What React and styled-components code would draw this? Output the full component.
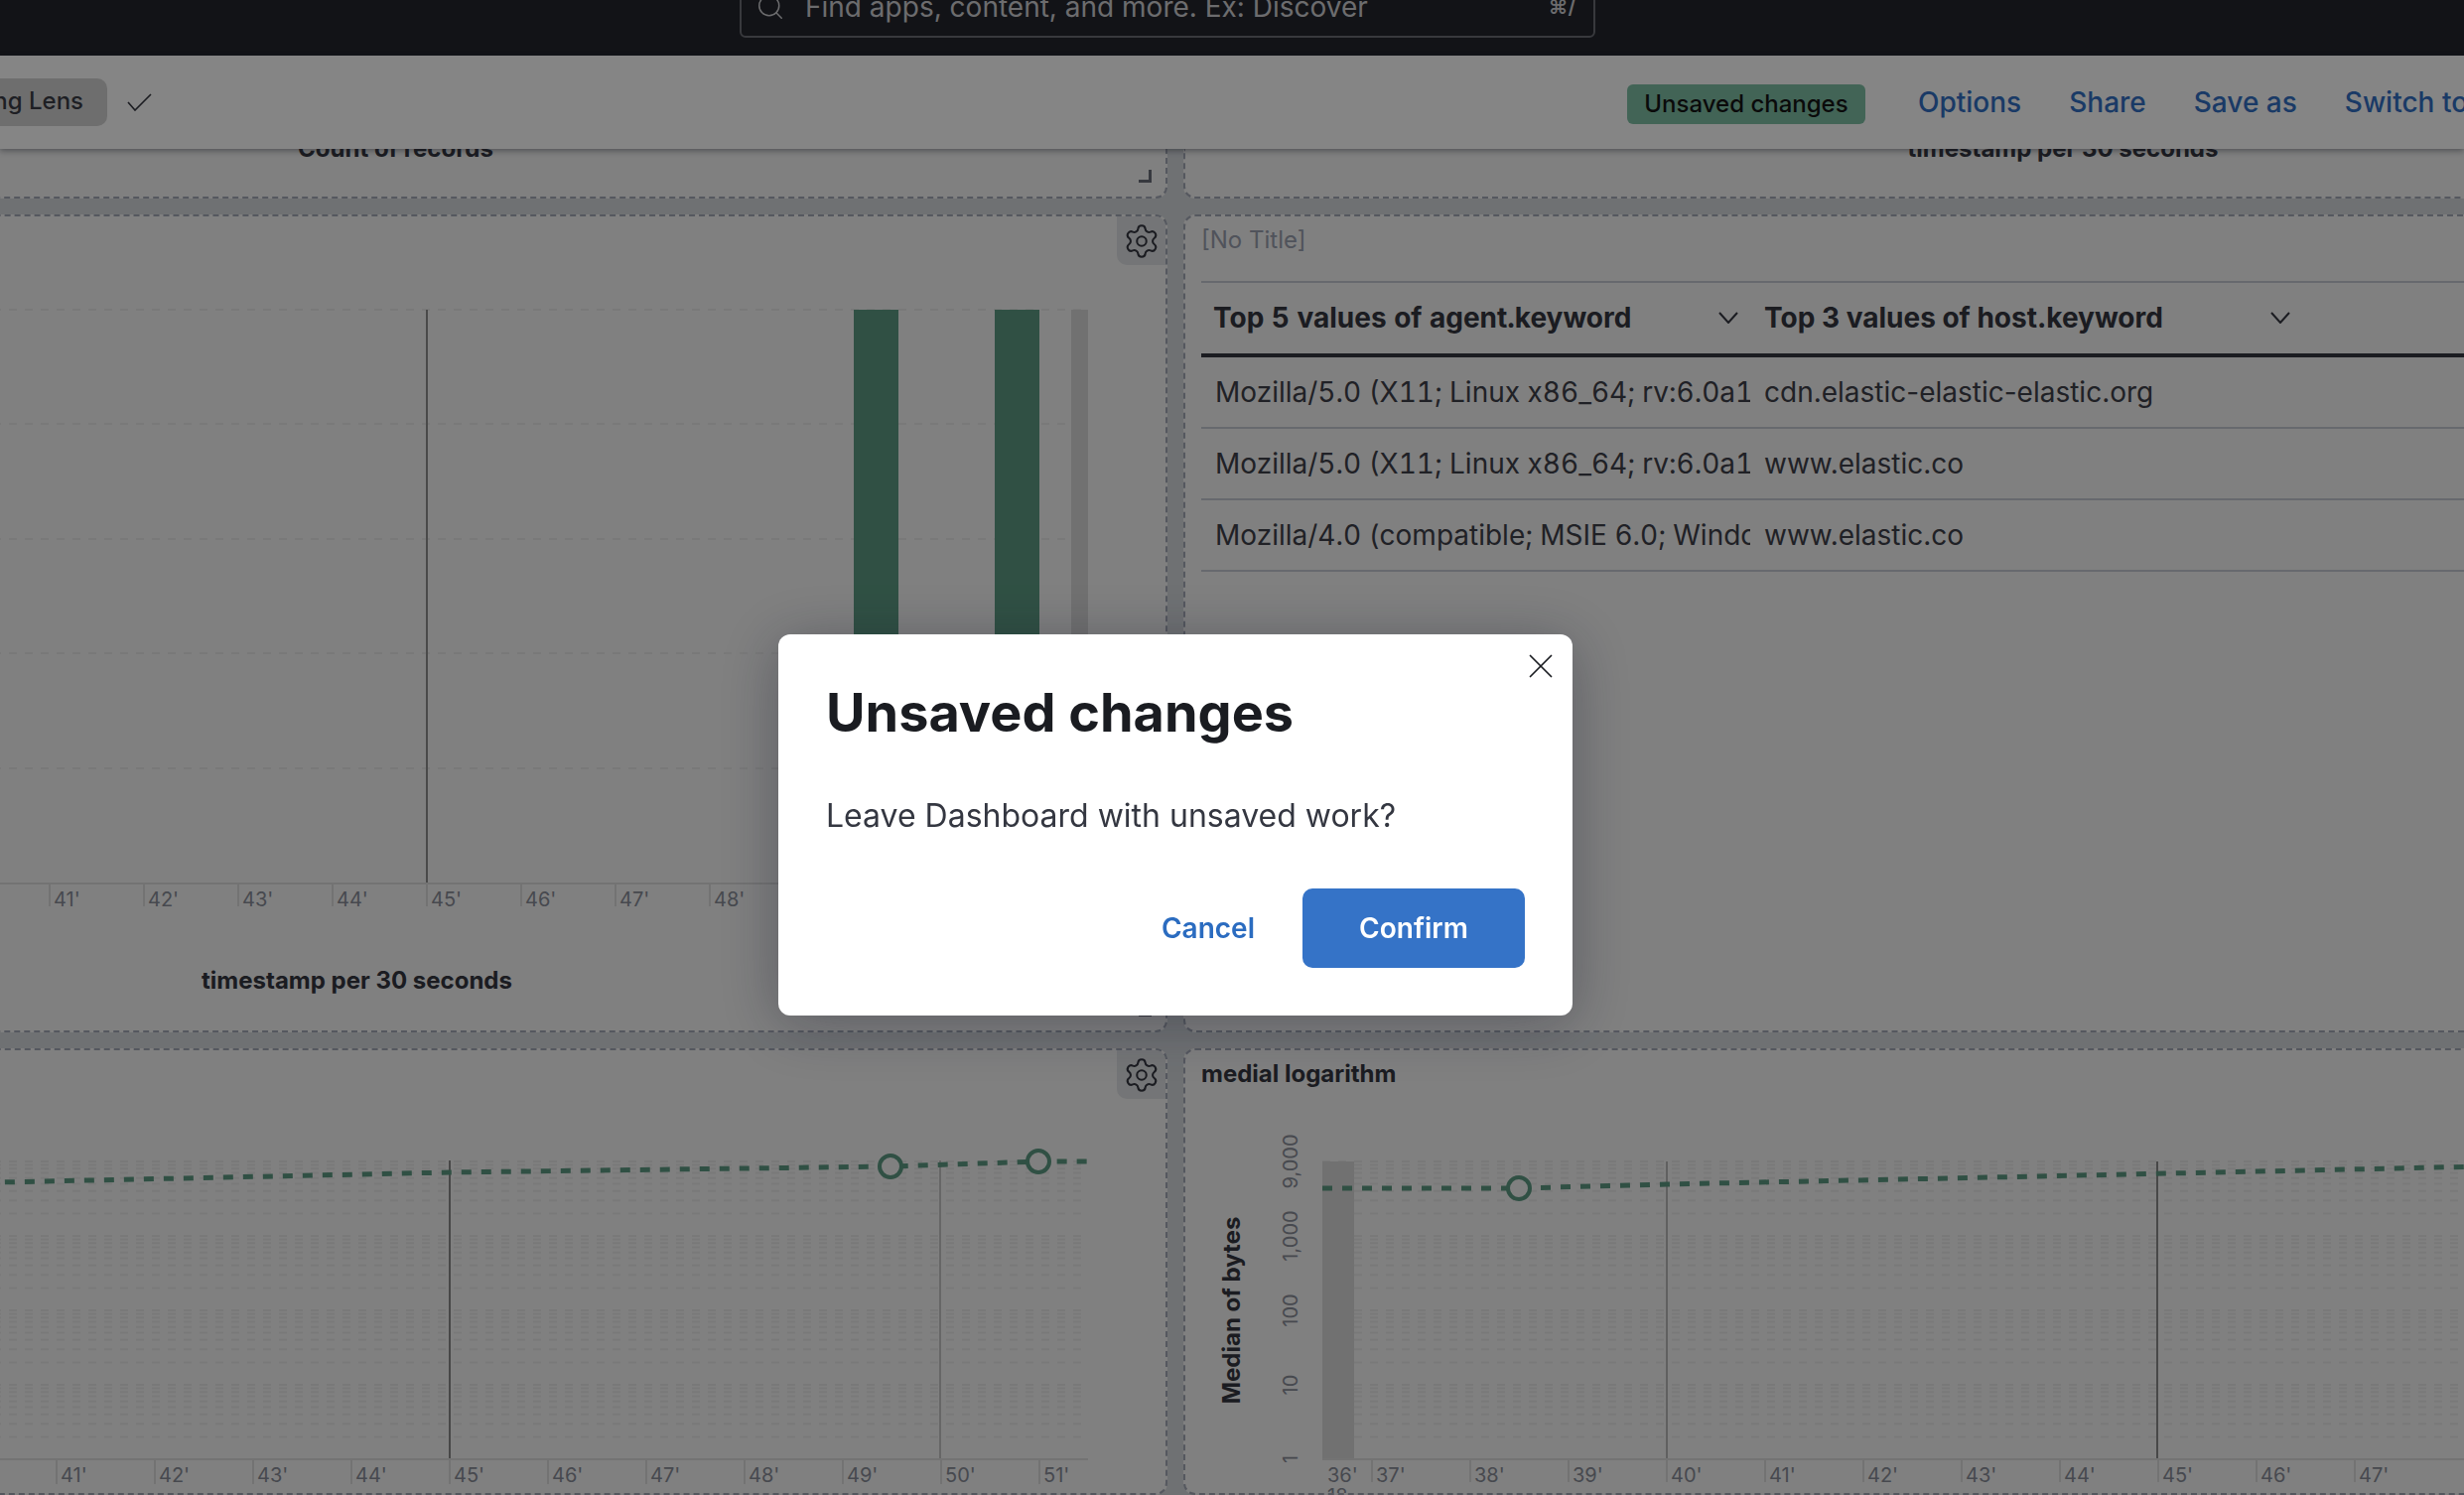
import styled, { createGlobalStyle } from "styled-components";
import { Search, Settings, X } from "lucide-react";

const GlobalStyle = createGlobalStyle`
  html, body {
    margin: 0;
    padding: 0;
    height: 100%;
    overflow: hidden;
    background: #f5f5f5;
    font-family: Inter, "Liberation Sans", sans-serif;
  }
`;

const Page = styled.div`
  width: 2482px;
  height: 1506px;
  overflow: hidden;
  display: flex;
  flex-direction: column;
`;

const TopBar = styled.header`
  height: 56px;
  flex: none;
  background: #23252c;
  padding-left: 745px;
  display: flex;
  align-items: flex-end;
  overflow: hidden;
`;

const SearchBox = styled.div`
  width: 862px;
  height: 60px;
  margin-bottom: 18px;
  flex: none;
  box-sizing: border-box;
  border: 2px solid #6c6e76;
  border-radius: 6px;
  display: flex;
  align-items: center;
  padding: 0 18px 3px 14px;
  color: #cfd0d4;
  font-size: 28px;
  white-space: nowrap;
  svg {
    flex: none;
    margin-right: 20px;
  }
`;

const Shortcut = styled.span`
  margin-left: auto;
  font-size: 20px;
  font-weight: 600;
`;

const Toolbar = styled.nav`
  position: relative;
  z-index: 2;
  height: 94px;
  flex: none;
  background: #fff;
  box-shadow: 0 2px 6px rgba(40, 44, 60, 0.45);
  display: flex;
  align-items: center;
  white-space: nowrap;
  overflow: hidden;
`;

const LeftGroup = styled.div`
  width: 1639px;
  flex: none;
`;

const Crumbs = styled.div`
  width: 153px;
  display: flex;
  align-items: center;
  justify-content: flex-end;
  gap: 20px;
  overflow: hidden;
  svg {
    flex: none;
  }
`;

const Pill = styled.span`
  flex: none;
  height: 48px;
  line-height: 46px;
  padding: 0 24px;
  box-sizing: border-box;
  background: #d4d4d4;
  border-radius: 10px;
  font-size: 24px;
  font-weight: 500;
  color: #3a3c46;
`;

const Badge = styled.span`
  flex: none;
  width: 240px;
  height: 40px;
  margin-top: 4px;
  line-height: 40px;
  text-align: center;
  background: #7fc0a6;
  border-radius: 6px;
  font-size: 24px;
  font-weight: 500;
  color: #151515;
`;

const Links = styled.div`
  display: flex;
  gap: 48px;
  margin-left: 53px;
`;

const NavLink = styled.a`
  font-size: 28px;
  font-weight: 500;
  color: #3370c4;
`;

const Dashboard = styled.main`
  flex: none;
  margin-left: -457px;
  display: grid;
  grid-template-columns: 1633px 1772px;
  grid-template-rows: 50px 824px 450px;
  gap: 16px;
  background: #d5d9dd;
`;

const Panel = styled.section`
  position: relative;
  box-sizing: border-box;
  min-height: 0;
  overflow: hidden;
  display: flex;
  flex-direction: column;
  background: #f5f5f5;
  border: 2px dashed #a4a9b7;
  border-top-style: ${(p) => (p.$clipped ? "none" : "dashed")};
  border-radius: ${(p) => (p.$clipped ? "0 0 12px 12px" : "12px")};
  justify-content: ${(p) => (p.$clipped ? "flex-end" : "flex-start")};
  padding-bottom: ${(p) => (p.$clipped ? "33px" : "0")};
`;

const CenteredTitle = styled.h3`
  margin: ${(p) => p.$top || 0}px 0 0;
  padding-left: ${(p) => p.$shift || 0}px;
  font-size: 24px;
  line-height: 30px;
  font-weight: 700;
  text-align: center;
  color: #343640;
`;

const PanelTitle = styled.h3`
  margin: 0;
  padding: 9px 0 0 16px;
  font-size: 24px;
  line-height: 30px;
  font-weight: ${(p) => (p.$muted ? 400 : 700)};
  color: ${(p) => (p.$muted ? "#9aa0ae" : "#343640")};
`;

const ResizeHandle = styled.i`
  position: absolute;
  right: 14px;
  bottom: 14px;
  width: 10px;
  height: 10px;
  border-right: 3px solid #6a6d7a;
  border-bottom: 3px solid #6a6d7a;
`;

const GearTab = styled.div`
  position: absolute;
  top: 0;
  right: 0;
  width: 49px;
  height: 49px;
  background: #dfe1e4;
  border-radius: 0 0 0 10px;
  color: #343640;
  display: flex;
  align-items: center;
  justify-content: center;
`;

const ChartBox = styled.div`
  padding-top: ${(p) => p.$top || 0}px;
  line-height: 0;
  svg {
    display: block;
  }
`;

const DataTable = styled.div`
  margin: 26px 0 0 16px;
  border-top: 2px solid #c6cad4;
`;

const TableRow = styled.div`
  display: grid;
  grid-template-columns: 555px 1fr;
  height: ${(p) => (p.$head ? "75px" : "72px")};
  box-sizing: border-box;
  padding-bottom: ${(p) => (p.$head ? "2px" : "0")};
  border-bottom: ${(p) => (p.$head ? "4px solid #343640" : "2px solid #c6cad4")};
  font-size: 28px;
  font-weight: ${(p) => (p.$head ? 700 : 400)};
  color: ${(p) => (p.$head ? "#343640" : "#3e4049")};
`;

const Cell = styled.div`
  display: flex;
  align-items: center;
  justify-content: space-between;
  padding: 0 ${(p) => (p.$head ? "14px" : "2px")} 0 ${(p) => (p.$head ? "12px" : "14px")};
  overflow: hidden;
  white-space: nowrap;
  font-variant-numeric: tabular-nums;
  svg {
    flex: none;
  }
`;

const CellText = styled.span`
  overflow: hidden;
  flex: 1;
`;

const Secondary = styled(Cell)`
  width: 556px;
  box-sizing: border-box;
  padding-left: 12px;
  font-variant-numeric: normal;
`;

const Overlay = styled.div`
  position: fixed;
  inset: 0;
  z-index: 10;
  background: rgba(0, 0, 0, 0.48);
  display: flex;
  align-items: center;
  justify-content: center;
  padding: 156px 114px 0 0;
  box-sizing: border-box;
`;

const Modal = styled.div`
  position: relative;
  box-sizing: border-box;
  width: 800px;
  height: 384px;
  padding: 47px 48px 48px 48px;
  background: #fff;
  border-radius: 12px;
  box-shadow: 0 8px 60px rgba(20, 24, 40, 0.35);
  display: flex;
  flex-direction: column;
`;

const CloseButton = styled.button`
  position: absolute;
  top: 11px;
  right: 11px;
  width: 42px;
  height: 42px;
  padding: 0;
  border: 0;
  background: none;
  color: #1a1c21;
  display: flex;
  align-items: center;
  justify-content: center;
`;

const ModalTitle = styled.h2`
  margin: 0;
  font-size: 54px;
  line-height: 64px;
  font-weight: 700;
  color: #1a1c21;
`;

const ModalBody = styled.p`
  margin: 50px 0 0;
  font-size: 32px;
  line-height: 44px;
  color: #343741;
`;

const ModalFooter = styled.div`
  margin-top: auto;
  display: flex;
  justify-content: flex-end;
  align-items: center;
  gap: 48px;
`;

const CancelButton = styled.button`
  border: 0;
  padding: 0;
  background: none;
  font: 600 28px Inter, sans-serif;
  color: #2b6cc0;
`;

const ConfirmButton = styled.button`
  width: 224px;
  height: 80px;
  border: 0;
  border-radius: 10px;
  background: #3573c7;
  font: 600 28px Inter, sans-serif;
  color: #fff;
`;

const GREEN = "#5c9a82";
const AXIS = "#dcdcdc";
const LABEL = "#898d98";
const GRID = "#e9e9e9";

const logLines = [];
for (let d = 0; d < 4; d++) {
  for (let m = 1; m < 10; m++) logLines.push(1470 - 75 * (d + Math.log10(m)));
}
logLines.push(1170);

const ticks = (start, step, first, count) =>
  Array.from({ length: count }, (_, i) => ({ x: start + step * i, label: `${first + i}'` }));

const AxisTicks = ({ items, top, bottom, baseline }) =>
  items.map((t) => (
    <g key={t.label}>
      <line x1={t.x} x2={t.x} y1={top} y2={bottom} stroke={AXIS} strokeWidth="2" />
      <text x={t.x + 4} y={baseline} fontSize="20" fill={LABEL} fontFamily="Inter">
        {t.label}
      </text>
    </g>
  ));

const Marker = ({ x, y }) => <circle cx={x} cy={y} r="11" fill="#f5f5f5" stroke={GREEN} strokeWidth="4" />;

const CheckIcon = () => (
  <svg width="25" height="18" viewBox="0 0 25 18" fill="none" stroke="#343640" strokeWidth="1.6">
    <path d="M1 9l7 8L24 1" />
  </svg>
);

const Chevron = () => (
  <svg width="20" height="12" viewBox="0 0 20 12" fill="none" stroke="#343640" strokeWidth="2">
    <path d="M1 1l9 10 9-10" />
  </svg>
);

const Gear = () => (
  <GearTab>
    <Settings size={38} strokeWidth={1.3} />
  </GearTab>
);

const BarChart = () => (
  <svg width="1629" height="620" viewBox="-455 300 1629 620">
    {[312, 427, 543, 658, 774].map((y) => (
      <line key={y} x1="-455" x2="1096" y1={y} y2={y} stroke={GRID} strokeWidth="2" strokeDasharray="8 8" />
    ))}
    <line x1="430" x2="430" y1="312" y2="890" stroke="#8f8f8f" strokeWidth="2" />
    <rect x="860" y="312" width="45" height="578" fill={GREEN} />
    <rect x="1002" y="312" width="45" height="578" fill={GREEN} />
    <rect x="1079" y="312" width="17" height="578" fill="#d8d8d8" />
    <line x1="-455" x2="1096" y1="890" y2="890" stroke={AXIS} strokeWidth="2" />
    <AxisTicks items={ticks(50, 95, 41, 8)} top={890} bottom={913} baseline={913} />
  </svg>
);

const LeftLogChart = () => (
  <svg width="1629" height="406" viewBox="-455 1100 1629 406">
    {logLines.map((y) => (
      <line key={y} x1="-455" x2="1096" y1={y} y2={y} stroke={GRID} strokeWidth="2" strokeDasharray="8 8" />
    ))}
    <line x1="453" x2="453" y1="1169" y2="1470" stroke="#8a8a8a" strokeWidth="2" />
    <line x1="947" x2="947" y1="1169" y2="1470" stroke="#c4c4c4" strokeWidth="2" />
    <line x1="-455" x2="1096" y1="1470" y2="1470" stroke={AXIS} strokeWidth="2" />
    <polyline
      points="-455,1201 453,1181 897,1175 1046,1170 1096,1170"
      fill="none"
      stroke={GREEN}
      strokeWidth="5"
      strokeDasharray="10 10"
    />
    <Marker x={897} y={1175} />
    <Marker x={1046} y={1170} />
    <AxisTicks items={ticks(57, 99, 41, 11)} top={1470} bottom={1495} baseline={1493} />
  </svg>
);

const yLabels = [
  { y: 1170, t: "9,000" },
  { y: 1245, t: "1,000" },
  { y: 1320, t: "100" },
  { y: 1395, t: "10" },
  { y: 1470, t: "1" },
];

const RightLogChart = () => (
  <svg width="1768" height="406" viewBox="1194 1100 1768 406">
    <text
      transform="translate(1249 1320) rotate(-90)"
      textAnchor="middle"
      fontSize="24"
      fontWeight="700"
      fill="#343640"
      fontFamily="Inter"
    >
      Median of bytes
    </text>
    {yLabels.map((l) => (
      <text
        key={l.t}
        transform={`translate(1307 ${l.y}) rotate(-90)`}
        textAnchor="middle"
        fontSize="20"
        fill={LABEL}
        fontFamily="Inter"
      >
        {l.t}
      </text>
    ))}
    {logLines.map((y) => (
      <line key={y} x1="1332" x2="2500" y1={y} y2={y} stroke={GRID} strokeWidth="2" strokeDasharray="8 8" />
    ))}
    <rect x="1332" y="1170" width="32" height="300" fill="#d8d8d8" />
    <line x1="1679" x2="1679" y1="1170" y2="1470" stroke="#b8b8b8" strokeWidth="2" />
    <line x1="2173" x2="2173" y1="1170" y2="1470" stroke="#8a8a8a" strokeWidth="2" />
    <line x1="1332" x2="2500" y1="1470" y2="1470" stroke={AXIS} strokeWidth="2" />
    <polyline
      points="1332,1197 1530,1197 1679,1193 1961,1187 2500,1175"
      fill="none"
      stroke={GREEN}
      strokeWidth="5"
      strokeDasharray="10 10"
    />
    <Marker x={1530} y={1197} />
    <text x="1337" y="1493" fontSize="20" fill={LABEL} fontFamily="Inter">
      36'
    </text>
    <text x="1337" y="1514" fontSize="20" fill={LABEL} fontFamily="Inter">
      18
    </text>
    <AxisTicks items={ticks(1382, 99, 37, 11)} top={1470} bottom={1493} baseline={1493} />
  </svg>
);

const rows = [
  ["Mozilla/5.0 (X11; Linux x86_64; rv:6.0a1) Gecko/20110421 Firefox/6.0a1", "cdn.elastic-elastic-elastic.org"],
  ["Mozilla/5.0 (X11; Linux x86_64; rv:6.0a1) Gecko/20110421 Firefox/6.0a1", "www.elastic.co"],
  ["Mozilla/4.0 (compatible; MSIE 6.0; Windows NT 5.1; SV1; .NET CLR 1.1.4322)", "www.elastic.co"],
];

const App = () => (
  <>
    <GlobalStyle />
    <Page>
      <TopBar>
        <SearchBox>
          <Search size={30} strokeWidth={1.2} />
          Find apps, content, and more. Ex: Discover
          <Shortcut>⌘/</Shortcut>
        </SearchBox>
      </TopBar>
      <Toolbar>
        <LeftGroup>
          <Crumbs>
            <Pill>Testing Lens</Pill>
            <CheckIcon />
          </Crumbs>
        </LeftGroup>
        <Badge>Unsaved changes</Badge>
        <Links>
          <NavLink>Options</NavLink>
          <NavLink>Share</NavLink>
          <NavLink>Save as</NavLink>
          <NavLink>Switch to</NavLink>
        </Links>
      </Toolbar>
      <Dashboard>
        <Panel $clipped>
          <CenteredTitle $shift={78}>Count of records</CenteredTitle>
          <ResizeHandle />
        </Panel>
        <Panel $clipped>
          <CenteredTitle>timestamp per 30 seconds</CenteredTitle>
        </Panel>
        <Panel>
          <Gear />
          <ChartBox $top={82}>
            <BarChart />
          </ChartBox>
          <CenteredTitle $top={53}>timestamp per 30 seconds</CenteredTitle>
          <ResizeHandle />
        </Panel>
        <Panel>
          <PanelTitle $muted>[No Title]</PanelTitle>
          <DataTable>
            <TableRow $head>
              <Cell $head>
                <CellText>Top 5 values of agent.keyword</CellText>
                <Chevron />
              </Cell>
              <Secondary $head>
                <CellText>Top 3 values of host.keyword</CellText>
                <Chevron />
              </Secondary>
            </TableRow>
            {rows.map((r, i) => (
              <TableRow key={i}>
                <Cell>
                  <CellText>{r[0]}</CellText>
                </Cell>
                <Secondary>
                  <CellText>{r[1]}</CellText>
                </Secondary>
              </TableRow>
            ))}
          </DataTable>
        </Panel>
        <Panel>
          <Gear />
          <ChartBox $top={42}>
            <LeftLogChart />
          </ChartBox>
        </Panel>
        <Panel>
          <PanelTitle>medial logarithm</PanelTitle>
          <ChartBox $top={3}>
            <RightLogChart />
          </ChartBox>
        </Panel>
      </Dashboard>
    </Page>
    <Overlay>
      <Modal>
        <CloseButton>
          <X size={42} strokeWidth={1} />
        </CloseButton>
        <ModalTitle>Unsaved changes</ModalTitle>
        <ModalBody>Leave Dashboard with unsaved work?</ModalBody>
        <ModalFooter>
          <CancelButton>Cancel</CancelButton>
          <ConfirmButton>Confirm</ConfirmButton>
        </ModalFooter>
      </Modal>
    </Overlay>
  </>
);

export default App;
